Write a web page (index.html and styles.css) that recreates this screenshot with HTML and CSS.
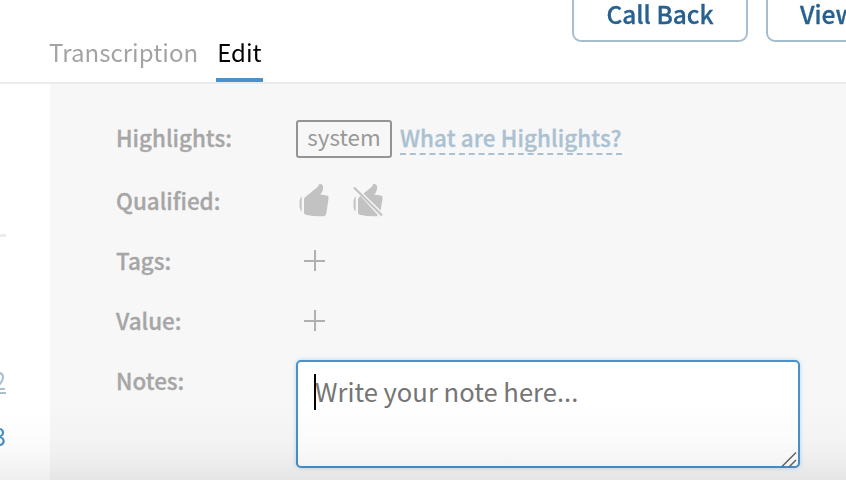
FILE: index.html
```html
<!DOCTYPE html>
<html lang="en">
<head>
<meta charset="utf-8">
<title>Edit call</title>
<link rel="stylesheet" href="styles.css">
</head>
<body>
<div class="page">
  <header class="top">
    <nav class="tabs">
      <a class="tab">Transcription</a>
      <a class="tab active">Edit</a>
    </nav>
    <div class="actions">
      <button class="btn btn-call">Call Back</button>
      <button class="btn btn-view">View</button>
    </div>
  </header>
  <div class="main">
    <aside class="side">
      <span class="side-bar"></span>
      <span class="side-num side-two">2</span>
      <span class="side-num side-three">3</span>
    </aside>
    <section class="panel">
      <div class="row row-high">
        <div class="label">Highlights:</div>
        <div class="value">
          <span class="chip">system</span>
          <a class="help">What are Highlights?</a>
        </div>
      </div>
      <div class="row row-qual">
        <div class="label">Qualified:</div>
        <div class="value thumbs">
          <svg class="thumb" width="30" height="34" viewBox="0 0 30 34" aria-hidden="true">
            <path d="M0.6 17.5Q0.9 14.6 2.6 13.4V28.4Q0.8 27 0.6 24Z"/>
            <path d="M5 30V16.5Q5 15 6.2 14L18 4.6Q19.4 3.4 20 1.4Q20.6 0.4 22.4 1.2Q24.6 2.2 24.2 5.4Q23.6 9.4 21.2 11.4L28 12.6Q30 13 29.6 15.6L27.4 29.4Q27 33 24.4 33.2Q14 33.6 8 32Q5 31.4 5 30Z"/>
          </svg>
          <svg class="thumb" width="32" height="34" viewBox="0 0 32 34" aria-hidden="true">
            <path d="M0.6 17.5Q0.9 14.6 2.6 13.4V28.4Q0.8 27 0.6 24Z"/>
            <path d="M5 30V16.5Q5 15 6.2 14L7.4 13 24.4 31.6Q24.6 33 24.4 33.2Q14 33.6 8 32Q5 31.4 5 30Z"/>
            <path d="M10.4 10.6L18 4.6Q19.4 3.4 20 1.4Q20.6 0.4 22.4 1.2Q24.6 2.2 24.2 5.4Q23.6 9.4 21.2 11.4L28 12.6Q30 13 29.6 15.6L27.6 27.6Z"/>
            <path class="slash" d="M1 4.5L29 32.5"/>
          </svg>
        </div>
      </div>
      <div class="row">
        <div class="label">Tags:</div>
        <div class="value"><span class="plus"></span></div>
      </div>
      <div class="row">
        <div class="label">Value:</div>
        <div class="value"><span class="plus"></span></div>
      </div>
      <div class="row row-notes">
        <div class="label">Notes:</div>
        <div class="value note-wrap">
          <textarea class="note" placeholder="Write your note here..."></textarea>
          <span class="caret"></span>
          <svg class="grip" width="16" height="16" viewBox="0 0 16 16" aria-hidden="true">
            <path d="M1 15.5L15 1.5M8.5 15.5L15 9"/>
          </svg>
        </div>
      </div>
    </section>
  </div>
  <div class="fade"></div>
</div>
</body>
</html>
```
FILE: styles.css
```css
* { box-sizing: border-box; }
html, body { margin: 0; padding: 0; background: #fff; }
body {
  font-family: "Noto Sans CJK SC", "Noto Sans", sans-serif;
  overflow: hidden;
}
.page {
  position: relative;
  width: 846px;
  height: 480px;
  overflow: hidden;
  display: flex;
  flex-direction: column;
  opacity: 0.999;
}
.top {
  flex: none;
  height: 84px;
  display: flex;
  align-items: flex-start;
  justify-content: space-between;
  padding-left: 48px;
  border-bottom: 2px solid #ebebeb;
}
.tabs {
  display: flex;
  gap: 17px;
  align-self: flex-end;
}
.tab {
  font-size: 24px;
  line-height: 32px;
  height: 53px;
  padding: 7px 1px 0;
  color: #a3a3a3;
  letter-spacing: 0.05px;
  border-bottom: 4px solid transparent;
}
.tab.active { color: #000; letter-spacing: 0; border-bottom-color: #4a90c9; }
.actions {
  flex: none;
  display: flex;
  gap: 18px;
  width: 274px;
  margin-top: -10px;
}
.btn {
  flex: none;
  height: 52px;
  padding: 0 0 4px;
  white-space: nowrap;
  font: 500 24.5px/30px "Noto Sans CJK SC", "Noto Sans", sans-serif;
  -webkit-text-stroke: 0.3px #28608f;
  color: #28608f;
  background: #fff;
  border: 2px solid #a6bdce;
  border-radius: 9px;
}
.btn-call { width: 176px; }
.btn-view { width: 160px; text-align: left; padding-left: 32px; }
.main { flex: 1; display: flex; min-height: 0; }
.side {
  flex: none;
  width: 50px;
  display: flex;
  flex-direction: column;
  align-items: flex-start;
}
.side-bar {
  width: 6px;
  height: 3px;
  margin-top: 150px;
  background: #ececec;
}
.side-num {
  width: 6px;
  overflow: hidden;
  direction: rtl;
  font-size: 24px;
  line-height: 30px;
}
.side-two { margin-top: 128px; color: #a9c0d2; text-decoration: underline; }
.side-three { margin-top: 26px; color: #4a90c9; }
.panel {
  flex: 1;
  background: #f7f7f7;
  padding: 24px 46px 0 66px;
}
.row {
  display: flex;
  height: 60px;
  align-items: flex-start;
}
.row-high { height: 63px; }
.label {
  flex: none;
  width: 180px;
  font-size: 22.4px;
  line-height: 30px;
  font-weight: 500;
  color: #a6a6a6;
  -webkit-text-stroke: 0.3px #a6a6a6;
  padding-top: 14px;
}
.value { flex: 1; display: flex; align-items: center; }
.row-high .value { padding-top: 12px; gap: 8px; }
.chip {
  height: 38px;
  width: 96px;
  border: 2px solid #949494;
  border-radius: 3px;
  text-align: center;
  font-size: 22.4px;
  line-height: 29px;
  color: #999;
}
.help {
  font-size: 22.4px;
  line-height: 28px;
  font-weight: 500;
  letter-spacing: 0.1px;
  color: #abc1d2;
  -webkit-text-stroke: 0.3px #abc1d2;
  padding-bottom: 2px;
  border-bottom: 2px dashed #abc1d2;
}
.thumbs { gap: 24.5px; padding: 12px 0 0 2.5px; }
.thumb { display: block; fill: #c2c2c2; flex: none; }
.slash { fill: none; stroke: #c2c2c2; stroke-width: 2.2; }
.plus {
  display: block;
  width: 21px;
  height: 21px;
  margin: 19px 0 0 8px;
  background:
    linear-gradient(#b0b0b0, #b0b0b0) center / 21px 2px no-repeat,
    linear-gradient(#b0b0b0, #b0b0b0) center / 2px 21px no-repeat;
}
.note-wrap { position: relative; padding-top: 9px; }
.note {
  display: block;
  width: 504px;
  height: 108px;
  padding: 13px 17px;
  resize: none;
  font: 400 25.6px/32px "Noto Sans CJK SC", "Noto Sans", sans-serif;
  color: #333;
  background: #fff;
  border: 2px solid #4a90c9;
  border-radius: 5px;
  outline: none;
  box-shadow: 0 0 4px rgba(74, 144, 201, .35);
}
.note::placeholder { color: #757575; }
.caret {
  position: absolute;
  left: 18px;
  top: 23px;
  width: 2px;
  height: 36px;
  background: #000;
}
.grip {
  position: absolute;
  left: 485px;
  top: 100px;
  fill: none;
  stroke: #666;
  stroke-width: 1.5;
}
.fade {
  position: absolute;
  left: 0;
  right: 0;
  bottom: 0;
  height: 80px;
  background: linear-gradient(rgba(0, 0, 0, 0), rgba(0, 0, 0, .015) 50%, rgba(0, 0, 0, .03) 70%, rgba(0, 0, 0, .07));
  pointer-events: none;
}
```
